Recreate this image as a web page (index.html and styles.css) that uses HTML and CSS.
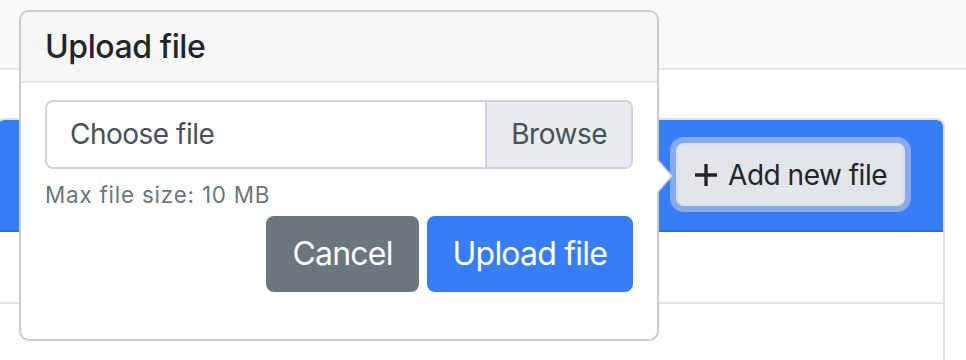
FILE: index.html
```html
<!DOCTYPE html>
<html lang="en">
<head>
<meta charset="UTF-8">
<meta name="viewport" content="width=device-width, initial-scale=1.0">
<title>Files</title>
<link rel="stylesheet" href="styles.css">
</head>
<body>

<div class="topbar"></div>

<div class="card">
    <div class="card-header">
        <button class="btn btn-light">
            <svg class="icon-plus" width="22" height="22" viewBox="0 0 22 22"><path d="M11 1v20M1 11h20" stroke="#212529" stroke-width="3.4" stroke-linecap="round"/></svg>
            Add new file
        </button>
    </div>
    <div class="card-row"></div>
    <div class="card-row"></div>
</div>

<div class="popover">
    <div class="arrow"></div>
    <h3 class="popover-header">Upload file</h3>
    <div class="popover-body">
        <div class="custom-file">
            <span class="custom-file-label">Choose file</span>
            <span class="custom-file-browse">Browse</span>
        </div>
        <small class="form-text">Max file size: 10 MB</small>
        <div class="actions">
            <button class="btn btn-secondary">Cancel</button>
            <button class="btn btn-primary">Upload file</button>
        </div>
    </div>
</div>

</body>
</html>
```

FILE: styles.css
```css
body {
    margin: 0;
    background-color: #fff;
    font-family: Inter, 'Helvetica Neue', Arial, sans-serif;
    color: #212529;
    overflow: hidden;
}

.topbar {
    height: 68px;
    background-color: #f8f9fa;
    border-bottom: 2px solid #e3e5e8;
}

.card {
    margin: 48px 21px 0 -4px;
    border: 2px solid #dfe1e4;
    border-bottom: none;
    border-radius: 8px 8px 0 0;
    height: 240px;
    overflow: hidden;
}

.card-header {
    display: flex;
    justify-content: flex-end;
    padding: 23px 38px 24px;
    background-color: #377ef6;
    border-bottom: 2px solid #2f6cd6;
    border-radius: 6px 6px 0 0;
}

.card-row {
    height: 70px;
    border-bottom: 2px solid #e3e5e8;
}

.btn {
    font-family: inherit;
    border: 2px solid transparent;
    border-radius: 8px;
    cursor: pointer;
}

.btn-light {
    display: flex;
    align-items: center;
    gap: 11px;
    height: 63px;
    padding: 0 16px 0 17px;
    font-size: 28px;
    letter-spacing: -0.5px;
    color: #212529;
    background-color: #e2e6ea;
    border-color: #dae0e5;
    box-shadow: 0 0 0 6px #87abec;
}

.popover {
    position: absolute;
    left: 19px;
    top: 10px;
    width: 640px;
    box-sizing: border-box;
    background-color: #fff;
    border: 2px solid #cbcbcb;
    border-radius: 10px;
}

.arrow {
    position: absolute;
    top: 148px;
    right: -16px;
    width: 0;
    height: 0;
    border-top: 16px solid transparent;
    border-bottom: 16px solid transparent;
    border-left: 14px solid #bfc9d8;
}

.arrow::after {
    content: '';
    position: absolute;
    top: -16px;
    left: -16px;
    border-top: 16px solid transparent;
    border-bottom: 16px solid transparent;
    border-left: 14px solid #fff;
}

.popover-header {
    margin: 0;
    padding: 16px 24px;
    font-size: 32px;
    font-weight: 500;
    line-height: 37px;
    letter-spacing: -0.4px;
    background-color: #f7f7f7;
    border-bottom: 2px solid #ebebeb;
    border-radius: 8px 8px 0 0;
}

.popover-body {
    padding: 17px 24px 47px;
    font-size: 28px;
}

.custom-file {
    display: flex;
    height: 69px;
    box-sizing: border-box;
    border: 2px solid #ced4da;
    border-radius: 8px;
    color: #495057;
    line-height: 65px;
    letter-spacing: -0.5px;
}

.custom-file-label {
    flex: 1;
    padding: 0 24px 0 23px;
}

.custom-file-browse {
    padding: 0 24px;
    background-color: #e9ecef;
    border-left: 2px solid #ced4da;
    border-radius: 0 6px 6px 0;
}

.form-text {
    display: block;
    margin-top: 9px;
    font-size: 22.4px;
    line-height: 34px;
    letter-spacing: 0.8px;
    color: #6c757d;
}

.actions {
    display: flex;
    justify-content: flex-end;
    gap: 8px;
    margin-top: 4px;
}

.actions .btn {
    padding: 12px 24px;
    font-size: 32px;
    line-height: 48px;
    letter-spacing: -0.8px;
    color: #fff;
}

.btn-secondary {
    background-color: #6d757d;
}

.btn-primary {
    background-color: #377ef6;
}
```
